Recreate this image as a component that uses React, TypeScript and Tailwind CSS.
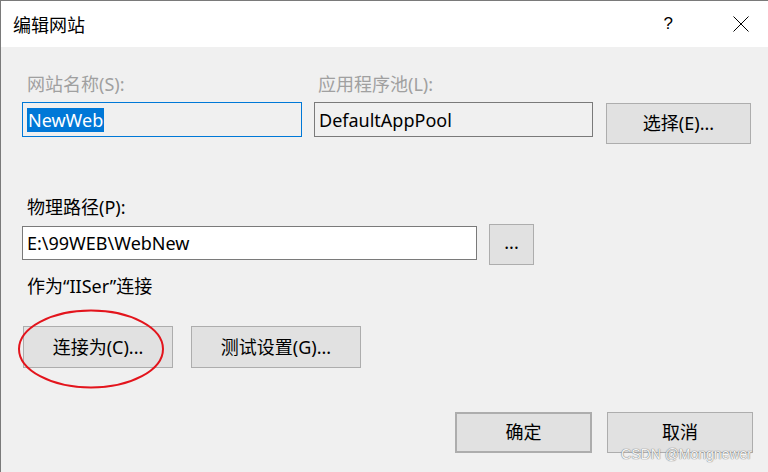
import React from "react";

const btn =
  "flex items-center justify-center bg-[#e1e1e1] border border-[#adadad] text-[18px] text-black";

export default function App() {
  return (
    <div className="relative w-[768px] h-[472px] overflow-hidden border-l border-t border-[#7a7a7a] bg-[#f0f0f0] font-['Segoe_UI','Noto_Sans','Noto_Sans_CJK_SC',sans-serif] text-black">
      {/* title bar */}
      <div className="h-[46px] bg-white flex items-center pl-[12px]">
        <span className="text-[18px] leading-[24px] font-['Noto_Sans_CJK_SC',sans-serif] -mt-[1px]">编辑网站</span>
        <div className="ml-auto flex items-center">
          <span className="text-[17px] leading-[20px] font-['Liberation_Sans',sans-serif] mr-[60px]">?</span>
          <svg width="16" height="16" viewBox="0 0 16 16" className="mr-[19px]">
            <path d="M0.5 0.5 L15.5 15.5 M15.5 0.5 L0.5 15.5" stroke="#000" strokeWidth="1" fill="none" />
          </svg>
        </div>
      </div>

      {/* body */}
      <div className="pl-[21px] pt-[25px] text-[18px]">
        {/* row 1 */}
        <div className="flex items-start">
          <div className="flex flex-col w-[280px]">
            <div className="leading-[24px] pl-[5px] text-[#a0a0a0]">网站名称(S):</div>
            <div className="mt-[6px] h-[35px] border border-[#0078d7] bg-[#f0f0f0] flex items-center pl-[4px]">
              <span className="bg-[#0078d7] text-white leading-[24px] px-[1px]">NewWeb</span>
            </div>
          </div>
          <div className="flex flex-col w-[279px] ml-[12px]">
            <div className="leading-[24px] pl-[4px] text-[#a0a0a0]">应用程序池(L):</div>
            <div className="mt-[6px] h-[35px] border border-[#7a7a7a] bg-[#f0f0f0] flex items-center pl-[4px] leading-[24px]">
              DefaultAppPool
            </div>
          </div>
          <div className={`${btn} ml-[13px] mt-[31px] w-[145px] h-[41px]`}>选择(E)...</div>
        </div>

        {/* physical path */}
        <div className="mt-[51px] leading-[24px] pl-[5px]">物理路径(P):</div>
        <div className="mt-[5px] flex items-start">
          <div className="mt-[2px] w-[455px] h-[34px] border border-[#7a7a7a] bg-white flex items-center pl-[4px] leading-[24px]">
            E:\99WEB\WebNew
          </div>
          <div className={`${btn} ml-[12px] w-[45px] h-[41px] pb-[4px] text-[15px]`}>...</div>
        </div>

        <div className="mt-[9px] leading-[24px] pl-[5px]">作为“IISer”连接</div>

        {/* connect buttons */}
        <div className="mt-[28px] flex items-start">
          <div className="relative ml-[1px]">
            <div className={`${btn} w-[150px] h-[42px]`}>连接为(C)...</div>
            <svg
              width="150"
              height="82"
              viewBox="0 0 150 82"
              className="absolute left-[-6px] top-[-17px] pointer-events-none"
            >
              <ellipse cx="74" cy="40" rx="72" ry="38.5" stroke="#e3141c" strokeWidth="2" fill="none" />
            </svg>
          </div>
          <div className={`${btn} ml-[18px] w-[170px] h-[42px]`}>测试设置(G)...</div>
        </div>

        {/* ok / cancel */}
        <div className="mt-[44px] flex justify-end pr-[15px]">
          <div className={`${btn} w-[137px] h-[41px] border-2 border-[#0078d7]`}>确定</div>
          <div className={`${btn} ml-[15px] w-[146px] h-[41px]`}>取消</div>
        </div>
      </div>

      <div className="absolute right-[16px] bottom-[9px] text-[14px] leading-[18px] text-[#f4f4f4] font-['Liberation_Sans',sans-serif] [text-shadow:0_0_1px_#777,0_0_1px_#777]">
        CSDN @Mongnewer
      </div>
    </div>
  );
}
